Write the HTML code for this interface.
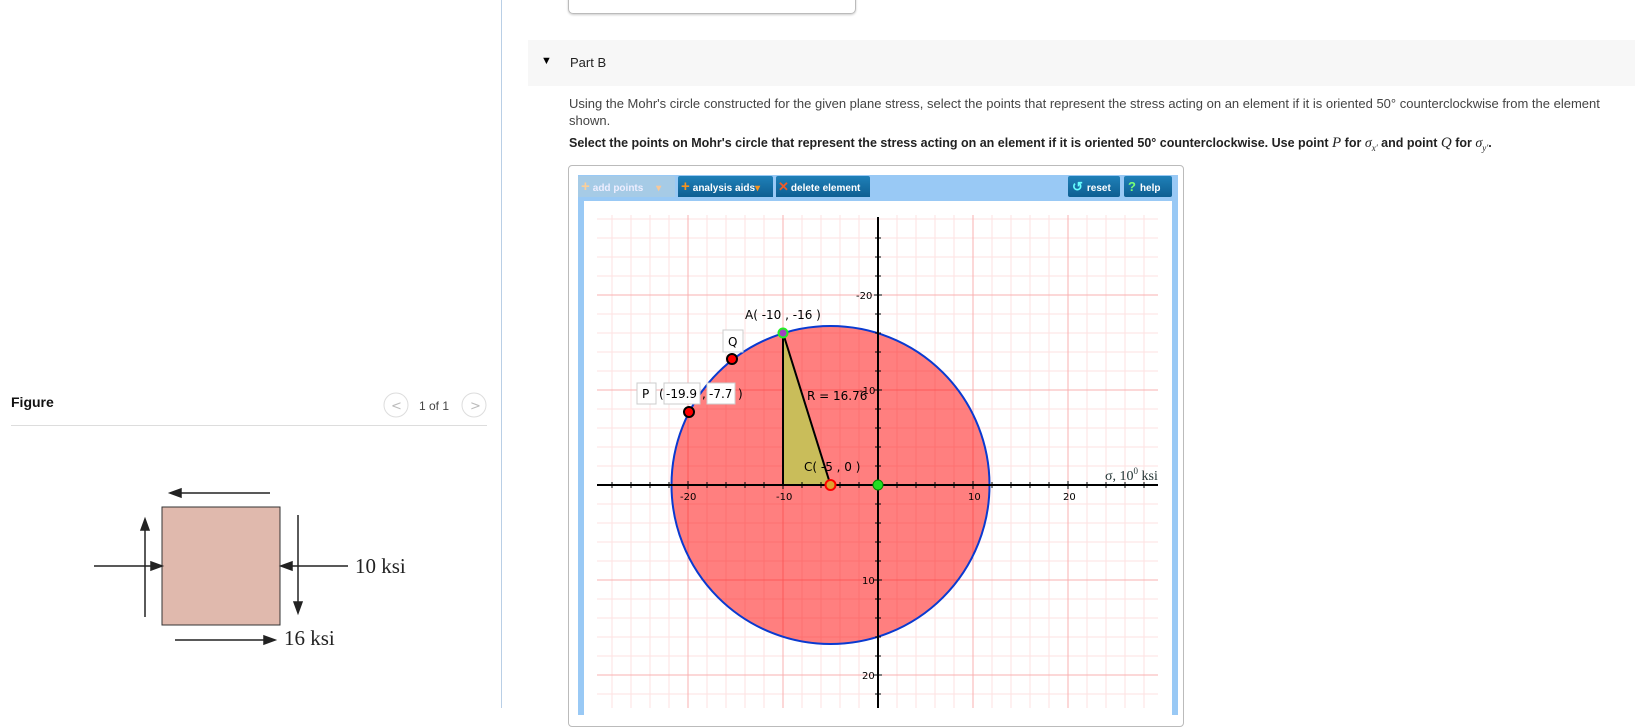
<!DOCTYPE html>
<html><head><meta charset="utf-8"><style>
body{margin:0;width:1641px;height:708px;overflow:hidden;background:#fff;font-family:"Liberation Sans",Arial,sans-serif;position:relative}
.a{position:absolute}
.btn{position:absolute;top:176px;height:21px;background:linear-gradient(#1f80b8,#0e5f92);color:#fff;font-weight:bold;font-size:10px;line-height:21px;border-radius:2px 2px 0 0;white-space:nowrap}
</style></head><body>
<div class="a" style="left:501px;top:0;width:1px;height:708px;background:#b9cfe6"></div>
<div class="a" style="left:568px;top:-10px;width:286px;height:22px;border:1px solid #bbb;border-radius:5px;box-shadow:0 1px 2px #ccc"></div>
<div class="a" style="left:528px;top:40px;width:1107px;height:46px;background:#f7f7f7"></div>
<div class="a" style="left:541px;top:55px;font-size:11px">&#9660;</div>
<div class="a" style="left:570px;top:55px;font-size:13px;color:#222">Part B</div>
<div class="a" style="left:569px;top:95px;font-size:13px;color:#444;line-height:17px;width:1040px">Using the Mohr's circle constructed for the given plane stress, select the points that represent the stress acting on an element if it is oriented 50° counterclockwise from the element shown.</div>
<div class="a" style="left:569px;top:135px;font-size:12.5px;color:#222;font-weight:bold">Select the points on Mohr's circle that represent the stress acting on an element if it is oriented 50° counterclockwise. Use point <i style="font-family:'Liberation Serif',serif;font-size:15px;font-weight:normal">P</i> for <i style="font-family:'Liberation Serif',serif;font-weight:normal;font-size:14px">σ<sub style="font-size:9px">x′</sub></i> and point <i style="font-family:'Liberation Serif',serif;font-size:15px;font-weight:normal">Q</i> for <i style="font-family:'Liberation Serif',serif;font-weight:normal;font-size:14px">σ<sub style="font-size:9px">y′</sub></i>.</div>
<div class="a" style="left:568px;top:165px;width:614px;height:560px;border:1px solid #bbb;border-radius:4px"></div>
<div class="a" style="left:578px;top:175px;width:600px;height:540px;background:#99c9f5"></div>
<div class="a" style="left:584px;top:201px;width:588px;height:520px;background:#fff"></div>
<div class="btn" style="left:578px;width:97px;background:#a6cbe6;color:#eef"><span style="color:#fbcf9a;font-size:15px;padding:0 3px">+</span>add points <span style="color:#f7c89a;margin-left:10px">▾</span></div>
<div class="btn" style="left:678px;width:95px"><span style="color:#f7931e;font-size:15px;padding:0 3px">+</span>analysis aids<span style="color:#f7931e">▾</span></div>
<div class="btn" style="left:776px;width:94px"><span style="color:#f05a28;font-size:13px;padding:0 2px">✕</span>delete element</div>
<div class="btn" style="left:1068px;width:52px;border-radius:2px"><span style="color:#6ff;font-size:13px;padding:0 4px">↺</span>reset</div>
<div class="btn" style="left:1124px;width:48px;border-radius:2px"><span style="color:#7f7;font-size:13px;padding:0 4px">?</span>help</div>
<svg class="a" style="left:0;top:0" width="1641" height="708" font-family="DejaVu Sans,sans-serif" font-size="11">
<g stroke="#fde2e2" stroke-width="1">
<line x1="612" y1="215" x2="612" y2="708"/><line x1="631" y1="215" x2="631" y2="708"/><line x1="650" y1="215" x2="650" y2="708"/><line x1="669" y1="215" x2="669" y2="708"/><line x1="707" y1="215" x2="707" y2="708"/><line x1="726" y1="215" x2="726" y2="708"/><line x1="745" y1="215" x2="745" y2="708"/><line x1="764" y1="215" x2="764" y2="708"/><line x1="802" y1="215" x2="802" y2="708"/><line x1="821" y1="215" x2="821" y2="708"/><line x1="840" y1="215" x2="840" y2="708"/><line x1="859" y1="215" x2="859" y2="708"/><line x1="897" y1="215" x2="897" y2="708"/><line x1="916" y1="215" x2="916" y2="708"/><line x1="935" y1="215" x2="935" y2="708"/><line x1="954" y1="215" x2="954" y2="708"/><line x1="992" y1="215" x2="992" y2="708"/><line x1="1011" y1="215" x2="1011" y2="708"/><line x1="1030" y1="215" x2="1030" y2="708"/><line x1="1049" y1="215" x2="1049" y2="708"/><line x1="1087" y1="215" x2="1087" y2="708"/><line x1="1106" y1="215" x2="1106" y2="708"/><line x1="1125" y1="215" x2="1125" y2="708"/><line x1="1144" y1="215" x2="1144" y2="708"/>
<line x1="597" y1="219" x2="1158" y2="219"/><line x1="597" y1="238" x2="1158" y2="238"/><line x1="597" y1="257" x2="1158" y2="257"/><line x1="597" y1="276" x2="1158" y2="276"/><line x1="597" y1="314" x2="1158" y2="314"/><line x1="597" y1="333" x2="1158" y2="333"/><line x1="597" y1="352" x2="1158" y2="352"/><line x1="597" y1="371" x2="1158" y2="371"/><line x1="597" y1="409" x2="1158" y2="409"/><line x1="597" y1="428" x2="1158" y2="428"/><line x1="597" y1="447" x2="1158" y2="447"/><line x1="597" y1="466" x2="1158" y2="466"/><line x1="597" y1="504" x2="1158" y2="504"/><line x1="597" y1="523" x2="1158" y2="523"/><line x1="597" y1="542" x2="1158" y2="542"/><line x1="597" y1="561" x2="1158" y2="561"/><line x1="597" y1="599" x2="1158" y2="599"/><line x1="597" y1="618" x2="1158" y2="618"/><line x1="597" y1="637" x2="1158" y2="637"/><line x1="597" y1="656" x2="1158" y2="656"/><line x1="597" y1="694" x2="1158" y2="694"/>
</g>
<g stroke="#f9b0b0" stroke-width="1">
<line x1="688" y1="215" x2="688" y2="708"/><line x1="783" y1="215" x2="783" y2="708"/><line x1="973" y1="215" x2="973" y2="708"/><line x1="1068" y1="215" x2="1068" y2="708"/>
<line x1="597" y1="295" x2="1158" y2="295"/><line x1="597" y1="390" x2="1158" y2="390"/><line x1="597" y1="580" x2="1158" y2="580"/><line x1="597" y1="675" x2="1158" y2="675"/>
</g>
<circle cx="830.5" cy="485" r="159" fill="#ff0000" fill-opacity="0.5" stroke="#0a3ad0" stroke-width="2"/>
<polygon points="783,333 783,485 830.5,485" fill="#c9bd5a" stroke="#000" stroke-width="2"/>
<line x1="597" y1="485" x2="1158" y2="485" stroke="#000" stroke-width="2"/>
<line x1="878" y1="217" x2="878" y2="708" stroke="#000" stroke-width="2"/>
<g stroke="#000" stroke-width="1">
<path d="M612 482v6M631 482v6M650 482v6M669 482v6M688 481v8M707 482v6M726 482v6M745 482v6M764 482v6M783 481v8M802 482v6M821 482v6M840 482v6M859 482v6M897 482v6M916 482v6M935 482v6M954 482v6M973 481v8M992 482v6M1011 482v6M1030 482v6M1049 482v6M1068 481v8M1087 482v6M1106 482v6M1125 482v6M1144 482v6"/>
<path d="M875 238h6M875 257h6M875 276h6M874 295h8M875 314h6M875 333h6M875 352h6M875 371h6M874 390h8M875 409h6M875 428h6M875 447h6M875 466h6M875 504h6M875 523h6M875 542h6M875 561h6M874 580h8M875 599h6M875 618h6M875 637h6M875 656h6M874 675h8M875 694h6"/>
</g>
<g font-size="10" fill="#000">
<text x="680" y="500">-20</text><text x="776" y="500">-10</text><text x="968" y="500">10</text><text x="1063" y="500">20</text>
<text x="856" y="299">-20</text><text x="859" y="394">-10</text><text x="862" y="584">10</text><text x="862" y="679">20</text>
</g>
<text x="1105" y="480" font-family="Liberation Serif,serif" font-size="14" fill="#233">σ, 10<tspan font-size="9" dy="-6">0</tspan><tspan dy="6"> ksi</tspan></text>
<text x="745" y="319" font-size="12">A( -10 , -16 )</text>
<text x="807" y="400" font-size="12">R = 16.76</text>
<text x="804" y="471" font-size="12">C( -5 , 0 )</text>
<rect x="723" y="330" width="20" height="22" fill="#fff" stroke="#ccc"/><text x="728" y="346" font-size="12">Q</text>
<rect x="637" y="383" width="19" height="21" fill="#fff" stroke="#ccc"/><text x="642" y="398" font-size="12">P</text>
<text x="659" y="398" font-size="12">(</text>
<rect x="664" y="383" width="36" height="21" fill="#fff" stroke="#ccc"/><text x="666" y="398" font-size="12">-19.9</text>
<text x="702" y="398" font-size="12">,</text>
<rect x="707" y="383" width="28" height="21" fill="#fff" stroke="#ccc"/><text x="709" y="398" font-size="12">-7.7</text>
<text x="738" y="398" font-size="12">)</text>
<circle cx="732" cy="359" r="5" fill="#f00" stroke="#000" stroke-width="2"/>
<circle cx="689" cy="412" r="5" fill="#f00" stroke="#000" stroke-width="2"/>
<circle cx="783" cy="333" r="4.5" fill="#a040c0" stroke="#2e2" stroke-width="2"/>
<circle cx="878" cy="485" r="5" fill="#2d2" stroke="#080" stroke-width="1"/>
<circle cx="830.5" cy="485" r="5" fill="#e0a030" stroke="#f00" stroke-width="2"/>
<rect x="162" y="507" width="118" height="118" fill="#e0b9ad" stroke="#333" stroke-width="1"/>
<g stroke="#222" stroke-width="1.5" fill="#222">
<line x1="178" y1="493" x2="270" y2="493"/><polygon points="170,493 181,489 181,497"/>
<line x1="145" y1="527" x2="145" y2="617"/><polygon points="145,519 141,530 149,530"/>
<line x1="94" y1="566" x2="155" y2="566"/><polygon points="162,566 151,562 151,570"/>
<line x1="298" y1="515" x2="298" y2="605"/><polygon points="298,613 294,602 302,602"/>
<line x1="288" y1="566" x2="348" y2="566"/><polygon points="281,566 292,562 292,570"/>
<line x1="175" y1="640" x2="268" y2="640"/><polygon points="275,640 264,636 264,644"/>
</g>
<text x="355" y="573" font-family="Liberation Serif,serif" font-size="21" fill="#222">10 ksi</text>
<text x="284" y="645" font-family="Liberation Serif,serif" font-size="21" fill="#222">16 ksi</text>
<circle cx="396" cy="405" r="12" fill="#fff" stroke="#ddd"/><text x="391" y="410" font-size="13" fill="#bbb">&lt;</text>
<circle cx="474" cy="405" r="12" fill="#fff" stroke="#ddd"/><text x="470" y="410" font-size="13" fill="#bbb">&gt;</text>
</svg>
<div class="a" style="left:11px;top:394px;font-size:14px;font-weight:bold;color:#111">Figure</div>
<div class="a" style="left:419px;top:399px;font-size:12px;color:#444">1 of 1</div>
<div class="a" style="left:11px;top:425px;width:476px;height:1px;background:#ddd"></div>
</body></html>
